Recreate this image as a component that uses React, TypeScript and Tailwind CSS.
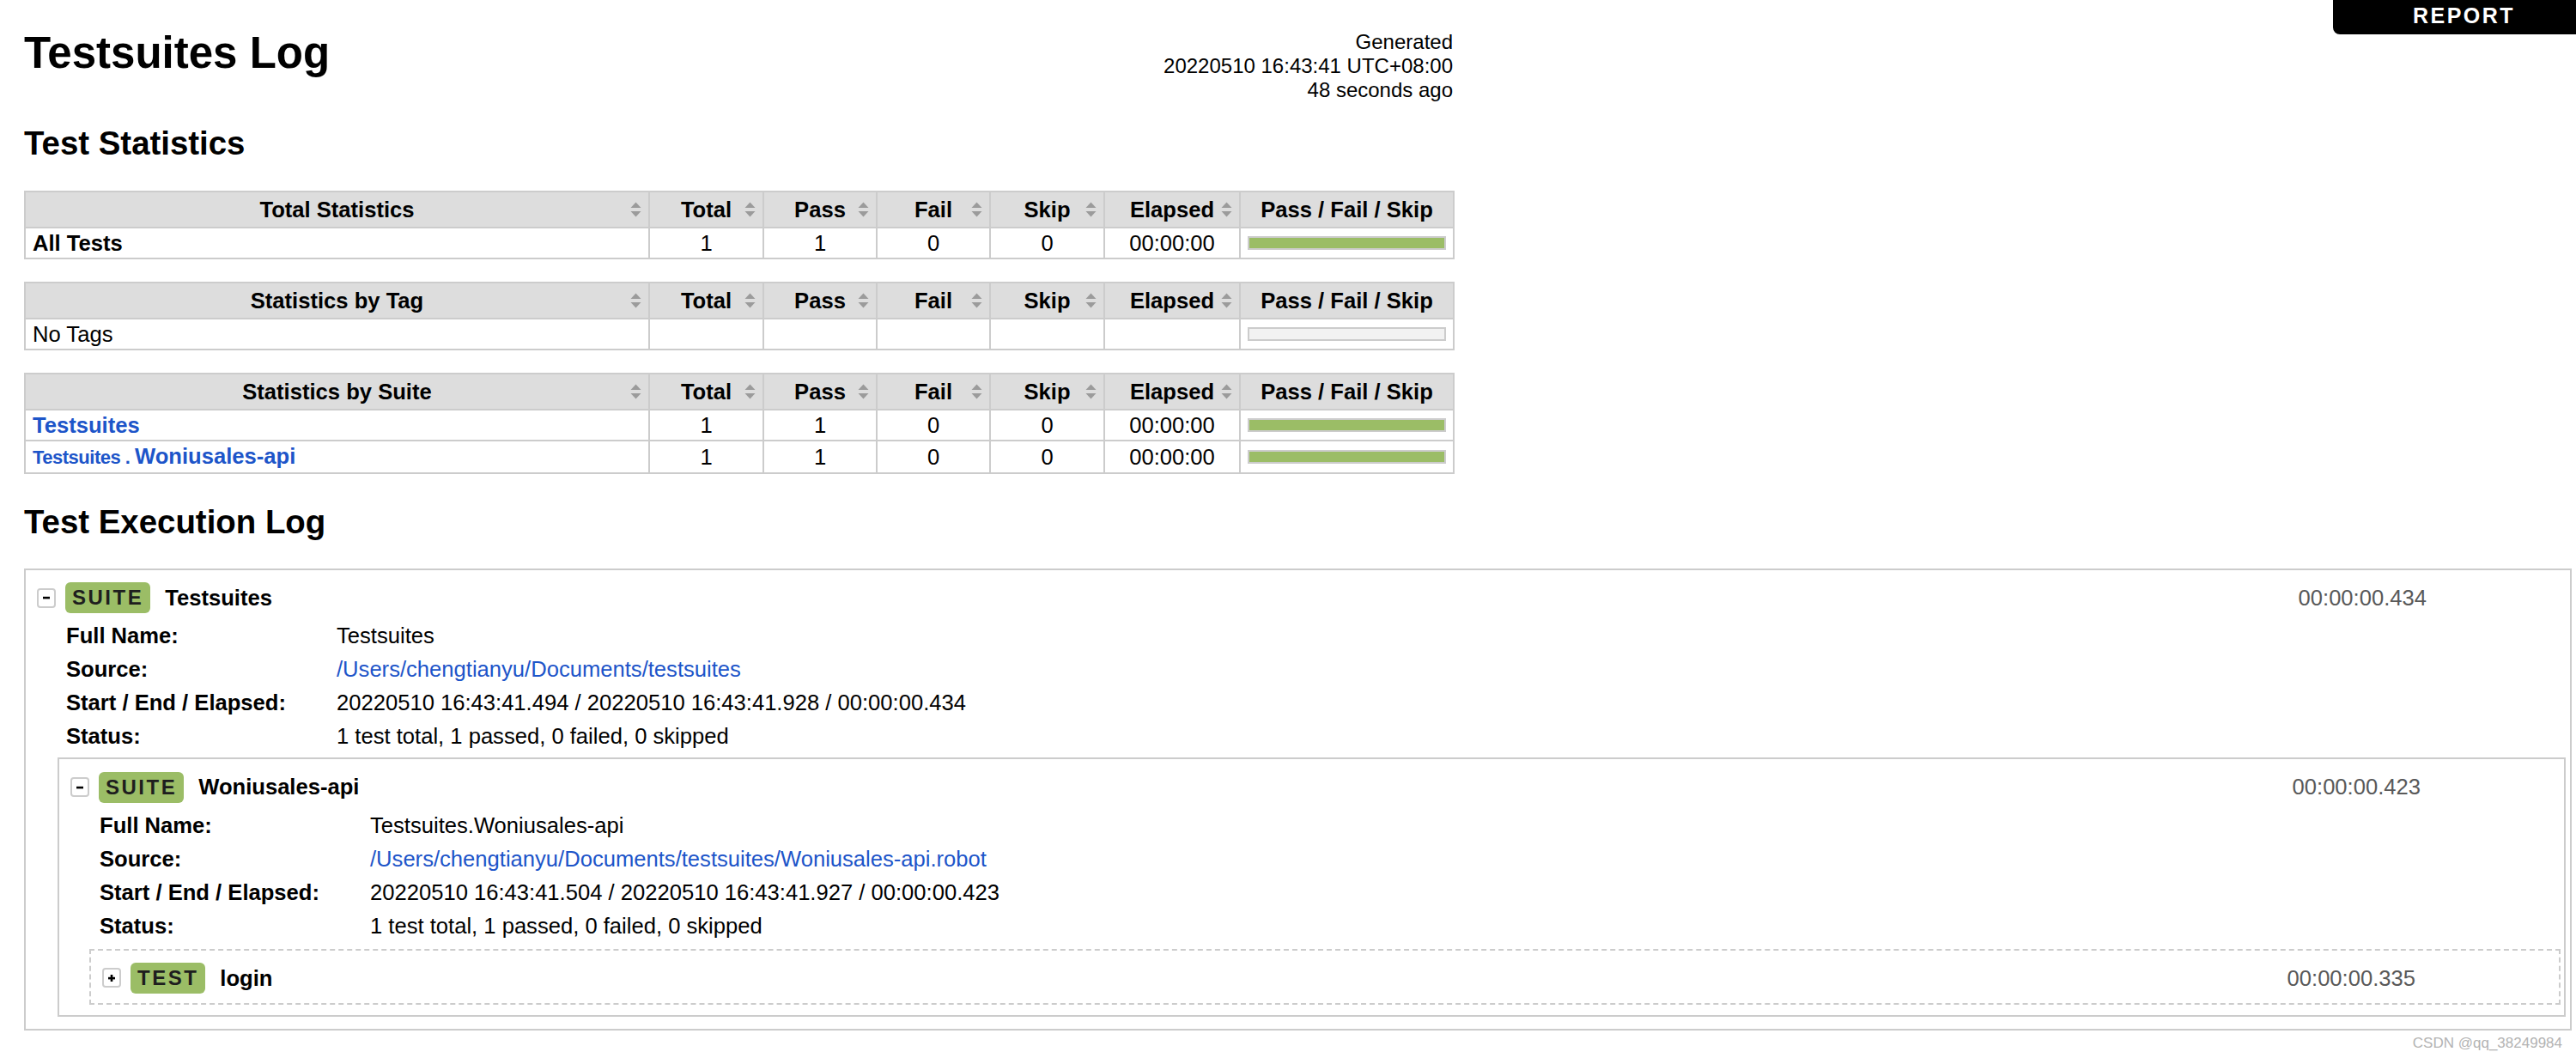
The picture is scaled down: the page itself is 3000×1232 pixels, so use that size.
import React from 'react';

const FONT = "font-['Liberation_Sans',Arial,Helvetica,sans-serif]";
const PASS_BG = 'bg-[#9bbd66]';
const LINK = 'text-[#1d55c9]';

type StatRow = {
  name: React.ReactNode;
  values: string[];
  graph: 'pass' | 'empty';
};

const SortIcon = () => (
  <svg
    width="13"
    height="18"
    viewBox="0 0 13 18"
    className="absolute right-[8px] top-1/2 -translate-y-1/2"
  >
    <path d="M6.5 0.5 L12.5 7 L0.5 7 Z" fill="#9b9b9b" />
    <path d="M0.5 11 L12.5 11 L6.5 17.5 Z" fill="#9b9b9b" />
  </svg>
);

const th =
  'relative border-2 border-[#ccc] bg-[#ddd] px-[8px] py-[5px] text-center font-bold leading-[30px]';
const td = 'border-2 border-[#ccc] px-[8px] py-[2px] text-center leading-[30px]';

function StatsTable({ title, rows }: { title: string; rows: StatRow[] }) {
  const heads = ['Total', 'Pass', 'Fail', 'Skip', 'Elapsed'];
  return (
    <table className="mb-[26px] w-[1664px] table-fixed border-collapse">
      <colgroup>
        <col className="w-[727px]" />
        <col className="w-[133px]" />
        <col className="w-[132px]" />
        <col className="w-[132px]" />
        <col className="w-[133px]" />
        <col className="w-[158px]" />
        <col className="w-[249px]" />
      </colgroup>
      <thead>
        <tr>
          <th className={th}>
            {title}
            <SortIcon />
          </th>
          {heads.map((h) => (
            <th key={h} className={th}>
              {h}
              <SortIcon />
            </th>
          ))}
          <th className={th}>Pass / Fail / Skip</th>
        </tr>
      </thead>
      <tbody>
        {rows.map((r, i) => (
          <tr key={i}>
            <td className="border-2 border-[#ccc] px-[8px] py-[2px] text-left leading-[30px]">{r.name}</td>
            {[0, 1, 2, 3, 4].map((j) => (
              <td key={j} className={td}>
                {r.values[j] ?? ''}
              </td>
            ))}
            <td className="border-2 border-[#ccc] px-[8px] py-[2px]">
              <div className="h-[16px] w-full border-2 border-[#ccc] bg-[#f2f2f2]">
                {r.graph === 'pass' && <div className={`h-full w-full ${PASS_BG}`} />}
              </div>
            </td>
          </tr>
        ))}
      </tbody>
    </table>
  );
}

const Toggle = ({ open }: { open: boolean }) => (
  <span className="flex h-[23px] w-[22px] shrink-0 items-center justify-center rounded-[4px] border-2 border-[#ccc] bg-white">
    <svg width="10" height="10" viewBox="0 0 10 10">
      <rect x="1" y="3.8" width="8" height="2.6" fill="#000" />
      {!open && <rect x="3.7" y="1" width="2.6" height="8" fill="#000" />}
    </svg>
  </span>
);

type Meta = { label: string; value: React.ReactNode };

function Element({
  kind,
  name,
  elapsed,
  open,
  meta,
  dashed,
  className,
  children,
}: {
  kind: string;
  name: string;
  elapsed: string;
  open: boolean;
  meta?: Meta[];
  dashed?: boolean;
  className?: string;
  children?: React.ReactNode;
}) {
  return (
    <div
      className={`border-2 border-[#ccc] ${dashed ? 'border-dashed' : 'border-solid'} ${className ?? ''}`}
    >
      <div className="flex items-center pb-[6px] pl-[13px] pr-[167px] pt-[13px]">
        <Toggle open={open} />
        <span
          className={`ml-[11px] h-[36px] rounded-[6px] ${PASS_BG} px-[8px] text-[24px] font-bold leading-[36px] tracking-[2.5px] text-[#1e1e1e]`}
        >
          {kind}
        </span>
        <span className="ml-[17px] font-bold">{name}</span>
        <span className="ml-auto text-[#595959]">{elapsed}</span>
      </div>
      {meta && (
        <div className="ml-[47px] flex flex-col">
          {meta.map((m) => (
            <div key={m.label} className="flex h-[39px] leading-[39px]">
              <span className="w-[315px] shrink-0 font-bold">{m.label}</span>
              <span>{m.value}</span>
            </div>
          ))}
        </div>
      )}
      {children}
    </div>
  );
}

export default function App() {
  return (
    <div className={`relative h-[1232px] w-[3000px] overflow-hidden bg-white text-[25.6px] text-black ${FONT}`}>
      <div className="absolute right-0 top-0 flex h-[40px] w-[283px] justify-center rounded-bl-[8px] bg-black pl-[22px] pt-[6px]">
        <span className="text-[25px] font-bold leading-[25px] tracking-[2.5px] text-white">REPORT</span>
      </div>

      <div className="pl-[28px] pr-[5px]">
        <div className="flex w-[1664px] items-start justify-between pt-[33px]">
          <h1 className="text-[51px] font-bold leading-[58px]">Testsuites Log</h1>
          <div className="mt-[2px] text-right text-[24px] leading-[28px]">
            <div>Generated</div>
            <div>20220510 16:43:41 UTC+08:00</div>
            <div>48 seconds ago</div>
          </div>
        </div>

        <h2 className="mt-[26px] text-[38.4px] font-bold leading-[44px]">Test Statistics</h2>

        <div className="mt-[33px]">
          <StatsTable
            title="Total Statistics"
            rows={[{ name: <b>All Tests</b>, values: ['1', '1', '0', '0', '00:00:00'], graph: 'pass' }]}
          />
          <StatsTable title="Statistics by Tag" rows={[{ name: 'No Tags', values: [], graph: 'empty' }]} />
          <StatsTable
            title="Statistics by Suite"
            rows={[
              {
                name: <span className={`font-bold ${LINK}`}>Testsuites</span>,
                values: ['1', '1', '0', '0', '00:00:00'],
                graph: 'pass',
              },
              {
                name: (
                  <span className={`font-bold ${LINK}`}>
                    <span className="text-[22px] tracking-[-0.5px]">Testsuites . </span>
                    Woniusales-api
                  </span>
                ),
                values: ['1', '1', '0', '0', '00:00:00'],
                graph: 'pass',
              },
            ]}
          />
        </div>

        <h2 className="mt-[34px] text-[38.4px] font-bold leading-[44px]">Test Execution Log</h2>

        <Element
          kind="SUITE"
          name="Testsuites"
          elapsed="00:00:00.434"
          open
          className="mt-[32px] pb-[14px]"
          meta={[
            { label: 'Full Name:', value: 'Testsuites' },
            { label: 'Source:', value: <span className={LINK}>/Users/chengtianyu/Documents/testsuites</span> },
            {
              label: 'Start / End / Elapsed:',
              value: '20220510 16:43:41.494 / 20220510 16:43:41.928 / 00:00:00.434',
            },
            { label: 'Status:', value: '1 test total, 1 passed, 0 failed, 0 skipped' },
          ]}
        >
          <div className="ml-[37px] mr-[5px] pt-[5px]">
            <Element
              kind="SUITE"
              name="Woniusales-api"
              elapsed="00:00:00.423"
              open
              className="pb-[12px]"
              meta={[
                { label: 'Full Name:', value: 'Testsuites.Woniusales-api' },
                {
                  label: 'Source:',
                  value: (
                    <span className={LINK}>/Users/chengtianyu/Documents/testsuites/Woniusales-api.robot</span>
                  ),
                },
                {
                  label: 'Start / End / Elapsed:',
                  value: '20220510 16:43:41.504 / 20220510 16:43:41.927 / 00:00:00.423',
                },
                { label: 'Status:', value: '1 test total, 1 passed, 0 failed, 0 skipped' },
              ]}
            >
              <div className="ml-[35px] mr-[4px] pt-[7px]">
                <Element kind="TEST" name="login" elapsed="00:00:00.335" open={false} dashed className="pb-[4px]" />
              </div>
            </Element>
          </div>
        </Element>
      </div>

      <div className="absolute bottom-[7px] right-[16px] text-[17px] leading-[20px] text-[#b3b3b3]">
        CSDN @qq_38249984
      </div>
    </div>
  );
}
